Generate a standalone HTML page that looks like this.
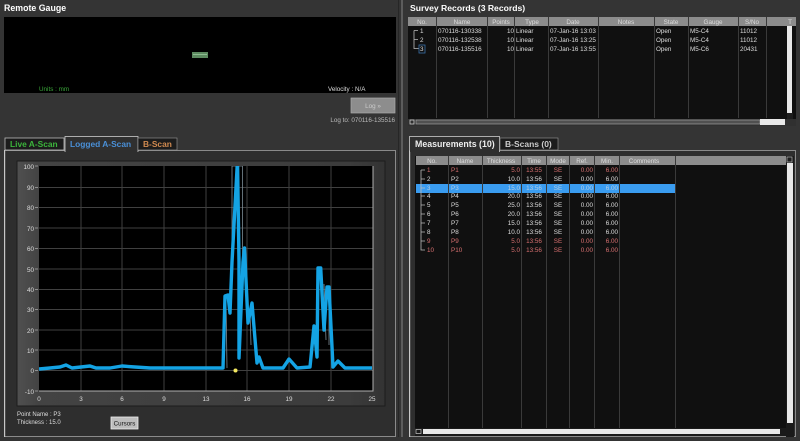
<!DOCTYPE html>
<html><head><meta charset="utf-8"><style>
html,body{margin:0;padding:0;background:#333;width:800px;height:441px;overflow:hidden}
svg{display:block;font-family:"Liberation Sans",sans-serif;filter:blur(.35px)}
text{font-size:6.3px;fill:#ddd}
.m{text-anchor:middle}.e{text-anchor:end}
.h text{fill:#ddd;text-anchor:middle;font-size:6.3px}
.r text{fill:#d87070}
.t{font-weight:bold;font-size:8.8px;fill:#fff}
</style></head><body>
<svg width="800" height="441" viewBox="0 0 800 441">
<defs>
<clipPath id="c"><rect x="39" y="166" width="334" height="225"/></clipPath>
<linearGradient id="g" x1="0" x2="1" y1="0" y2="0"><stop offset="0" stop-color="#505050"/><stop offset=".06" stop-color="#434343"/><stop offset=".9" stop-color="#3c3c3c"/><stop offset="1" stop-color="#333"/></linearGradient>
</defs>
<rect width="800" height="441" fill="#343434"/>
<text class="t" x="4" y="11">Remote Gauge</text>
<rect x="4" y="17" width="392" height="76" fill="#000"/>
<rect x="192" y="52" width="16" height="6" fill="#5d8a60"/>
<rect x="193" y="54" width="14" height="1" fill="#8dbb90"/>
<text x="39" y="91" style="fill:#3aa83a">Units : mm</text>
<text x="328" y="91" style="fill:#ddd">Velocity : N/A</text>
<rect x="351" y="98" width="44" height="15" fill="#8d8d8d" stroke="#aaa" stroke-width=".7"/>
<text class="m" x="373" y="108" style="fill:#ccc">Log »</text>
<text class="e" x="395" y="122" style="fill:#bbb">Log to: 070116-135516</text>

<!-- left tabs -->
<rect x="4.500" y="150.500" width="391" height="286" fill="#2e2e2e" stroke="#8a8a8a" stroke-width="1"/>
<rect x="4" y="150" width="1.200" height="287" fill="#c8c8c8"/>
<rect x="5" y="138" width="59" height="12" fill="#1c1c1c" stroke="#bbb" stroke-width=".8"/>
<rect x="65" y="136.500" width="73" height="15" fill="#303030" stroke="#ccc" stroke-width=".8"/>
<rect x="65.500" y="150" width="72" height="2" fill="#2e2e2e"/>
<rect x="138" y="138" width="39" height="12" fill="#1c1c1c" stroke="#999" stroke-width=".6"/>
<text x="10" y="147" style="font-size:8.400px;font-weight:bold;fill:#3cb53c">Live A-Scan</text>
<text x="70" y="147" style="font-size:8.400px;font-weight:bold;fill:#4a90d8">Logged A-Scan</text>
<text x="143" y="147" style="font-size:8.400px;font-weight:bold;fill:#d08a50">B-Scan</text>

<!-- plot panel -->
<rect x="17" y="161" width="368" height="245" fill="url(#g)" stroke="#1c1c1c"/>
<rect x="39" y="166" width="334" height="225" fill="#000"/>
<g stroke="#404040" stroke-width="1">
<path d="M81 166V391M122 166V391M164 166V391M206 166V391M247 166V391M289 166V391M331 166V391"/>
<path d="M39 187.500H373M39 207.500H373M39 228H373M39 248.500H373M39 269H373M39 289.500H373M39 309.500H373M39 330H373M39 350H373M39 370.500H373"/>
</g>
<path d="M39 391H373V166" fill="none" stroke="#b0b0b0" stroke-width="1"/>
<path d="M35 166H38M35 187.500H38M35 207.500H38M35 228H38M35 248.500H38M35 269H38M35 289.500H38M35 309.500H38M35 330H38M35 350H38M35 370.500H38M35 391H38" stroke="#aaa" stroke-width=".8"/>
<g>
<text class="e" x="34" y="169">100</text><text class="e" x="34" y="190">90</text><text class="e" x="34" y="210">80</text><text class="e" x="34" y="231">70</text><text class="e" x="34" y="251">60</text><text class="e" x="34" y="272">50</text><text class="e" x="34" y="292">40</text><text class="e" x="34" y="312">30</text><text class="e" x="34" y="333">20</text><text class="e" x="34" y="353">10</text><text class="e" x="34" y="373">0</text><text class="e" x="34" y="394">-10</text>
</g>
<g>
<text class="m" x="39" y="401">0</text><text class="m" x="81" y="401">3</text><text class="m" x="122" y="401">6</text><text class="m" x="164" y="401">9</text><text class="m" x="206" y="401">13</text><text class="m" x="247" y="401">16</text><text class="m" x="289" y="401">19</text><text class="m" x="331" y="401">22</text><text class="m" x="372" y="401">25</text>
</g>
<g clip-path="url(#c)">
<path d="M232 275L232 166H242.500V270M324 284L326 340M329 290V345M250 310L251 345M226 300L227 368" stroke="#7c8c96" stroke-width=".8" fill="none"/>
<polyline fill="none" stroke="#14a3e4" stroke-width="3.400" stroke-linejoin="round" points="39,369 50,368 60,367 66,365 72,368 90,366 96,368 110,368 122,366 135,367 150,368 180,368 223,368 225,296 228,295 230,313 232,262 237.500,160 239,262 239,358 243,262 244.500,248 248,323 252,303 257,363 259,357 263,368 283,368 289,359 297,368 310,367 314,326 317,357 318,268 320.700,268 324,330 327,287 329,287 333,367 338,361 345,368 372,368"/>
</g>
<circle cx="235.500" cy="370.500" r="2" fill="#f4e860"/>
<text x="17" y="416" style="font-size:6px">Point Name : P3</text>
<text x="17" y="424" style="font-size:6px">Thickness : 15.0</text>
<rect x="111" y="417" width="27" height="12" fill="#bdbdbd" stroke="#eee" stroke-width=".8"/>
<text class="m" x="124.500" y="425.500" style="fill:#111;font-size:6.200px">Cursors</text>

<!-- divider -->
<rect x="401" y="0" width="2" height="437" fill="#5c5c5c"/>
<rect x="398" y="0" width="1" height="437" fill="#262626"/>

<!-- survey -->
<text class="t" x="410" y="11" style="font-size:8.600px">Survey Records (3 Records)</text>
<rect x="408" y="17" width="388" height="103" fill="#101010"/>
<rect x="408" y="17" width="388" height="9" fill="#8c8c8c"/>
<g stroke="#3a3a3a" stroke-width="1"><path d="M436.500 17V118M487.500 17V118M514.500 17V118M548.500 17V118M598.500 17V118M654.500 17V118M688.500 17V118M738.500 17V118M766.500 17V118"/></g>
<g class="h">
<text x="422" y="24">No.</text><text x="462" y="24">Name</text><text x="501" y="24">Points</text><text x="532" y="24">Type</text><text x="573" y="24">Date</text><text x="626" y="24">Notes</text><text x="671" y="24">State</text><text x="713" y="24">Gauge</text><text x="752" y="24">S/No</text><text x="790" y="24">T</text>
</g>
<path d="M414 30.500H418M414 30.500V48.500H419M414 39.500H418" stroke="#bbb" fill="none" stroke-width=".8"/>
<rect x="419" y="45" width="6" height="8" fill="none" stroke="#3a6ea8" stroke-width=".8"/>
<text x="420" y="33">1</text><text x="420" y="42">2</text><text x="420" y="51">3</text>
<text x="438" y="33">070116-130338</text><text x="438" y="42">070116-132538</text><text x="438" y="51">070116-135516</text>
<text class="e" x="514" y="33">10</text><text class="e" x="514" y="42">10</text><text class="e" x="514" y="51">10</text>
<text x="516" y="33">Linear</text><text x="516" y="42">Linear</text><text x="516" y="51">Linear</text>
<text x="550" y="33">07-Jan-16 13:03</text><text x="550" y="42">07-Jan-16 13:25</text><text x="550" y="51">07-Jan-16 13:55</text>
<text x="656" y="33">Open</text><text x="656" y="42">Open</text><text x="656" y="51">Open</text>
<text x="690" y="33">M5-C4</text><text x="690" y="42">M5-C4</text><text x="690" y="51">M5-C6</text>
<text x="740" y="33">11012</text><text x="740" y="42">11012</text><text x="740" y="51">20431</text>
<rect x="787" y="26" width="5" height="90" fill="#e8e8e8"/>
<rect x="787" y="113" width="6" height="6" fill="#1e1e1e"/>
<rect x="408" y="119" width="388" height="7" fill="#303030"/>
<rect x="416" y="120" width="344" height="4" fill="#505050" stroke="#aaa" stroke-width=".6"/>
<rect x="760" y="119" width="25" height="6" fill="#e8e8e8"/>
<rect x="410" y="120" width="4" height="4" fill="none" stroke="#ccc" stroke-width=".8"/>

<!-- measurements tabs -->
<rect x="409.500" y="150.500" width="386" height="286" fill="#2e2e2e" stroke="#8a8a8a"/>
<rect x="409" y="150" width="1.200" height="287" fill="#c8c8c8"/>
<rect x="409.500" y="136.500" width="90" height="15" fill="#303030" stroke="#ccc" stroke-width=".8"/>
<rect x="410" y="150" width="89" height="2" fill="#2e2e2e"/>
<rect x="500" y="138" width="58" height="12" fill="#1c1c1c" stroke="#999" stroke-width=".6"/>
<text x="415" y="147" style="font-size:8.800px;font-weight:bold;fill:#eee">Measurements (10)</text>
<text x="505" y="147" style="font-size:8.500px;font-weight:bold;fill:#ccc">B-Scans (0)</text>

<rect x="415" y="156" width="372" height="272" fill="#101010"/>
<rect x="416" y="156" width="370" height="9" fill="#8c8c8c"/>
<rect x="416" y="184" width="260" height="9" fill="#3a9cf0"/>
<g stroke="#3a3a3a" stroke-width="1"><path d="M448.500 156V428M482.500 156V428M521.500 156V428M546.500 156V428M569.500 156V428M594.500 156V428M619.500 156V428M675.500 156V428"/></g>
<g class="h">
<text x="432" y="163">No.</text><text x="465" y="163">Name</text><text x="501" y="163">Thickness</text><text x="534" y="163">Time</text><text x="558" y="163">Mode</text><text x="582" y="163">Ref.</text><text x="607" y="163">Min.</text><text x="644" y="163">Comments</text>
</g>
<path d="M421 170H425M421 170V250H425M421 179H425M421 188H425M421 196H425M421 205H425M421 214H425M421 223H425M421 232H425M421 241H425" stroke="#bbb" fill="none" stroke-width=".8"/>
<g class="r"><text x="427" y="172">1</text><text x="451" y="172">P1</text><text class="e" x="520" y="172">5.0</text><text class="m" x="534" y="172">13:55</text><text class="m" x="558" y="172">SE</text><text class="e" x="593" y="172">0.00</text><text class="e" x="618" y="172">6.00</text></g>
<g><text x="427" y="181">2</text><text x="451" y="181">P2</text><text class="e" x="520" y="181">10.0</text><text class="m" x="534" y="181">13:56</text><text class="m" x="558" y="181">SE</text><text class="e" x="593" y="181">0.00</text><text class="e" x="618" y="181">6.00</text></g>
<g style="opacity:.75"><text x="427" y="190">3</text><text x="451" y="190">P3</text><text class="e" x="520" y="190">15.0</text><text class="m" x="534" y="190">13:56</text><text class="m" x="558" y="190">SE</text><text class="e" x="593" y="190">0.00</text><text class="e" x="618" y="190">6.00</text></g>
<g><text x="427" y="198">4</text><text x="451" y="198">P4</text><text class="e" x="520" y="198">20.0</text><text class="m" x="534" y="198">13:56</text><text class="m" x="558" y="198">SE</text><text class="e" x="593" y="198">0.00</text><text class="e" x="618" y="198">6.00</text></g>
<g><text x="427" y="207">5</text><text x="451" y="207">P5</text><text class="e" x="520" y="207">25.0</text><text class="m" x="534" y="207">13:56</text><text class="m" x="558" y="207">SE</text><text class="e" x="593" y="207">0.00</text><text class="e" x="618" y="207">6.00</text></g>
<g><text x="427" y="216">6</text><text x="451" y="216">P6</text><text class="e" x="520" y="216">20.0</text><text class="m" x="534" y="216">13:56</text><text class="m" x="558" y="216">SE</text><text class="e" x="593" y="216">0.00</text><text class="e" x="618" y="216">6.00</text></g>
<g><text x="427" y="225">7</text><text x="451" y="225">P7</text><text class="e" x="520" y="225">15.0</text><text class="m" x="534" y="225">13:56</text><text class="m" x="558" y="225">SE</text><text class="e" x="593" y="225">0.00</text><text class="e" x="618" y="225">6.00</text></g>
<g><text x="427" y="234">8</text><text x="451" y="234">P8</text><text class="e" x="520" y="234">10.0</text><text class="m" x="534" y="234">13:56</text><text class="m" x="558" y="234">SE</text><text class="e" x="593" y="234">0.00</text><text class="e" x="618" y="234">6.00</text></g>
<g class="r"><text x="427" y="243">9</text><text x="451" y="243">P9</text><text class="e" x="520" y="243">5.0</text><text class="m" x="534" y="243">13:56</text><text class="m" x="558" y="243">SE</text><text class="e" x="593" y="243">0.00</text><text class="e" x="618" y="243">6.00</text></g>
<g class="r"><text x="427" y="252">10</text><text x="451" y="252">P10</text><text class="e" x="520" y="252">5.0</text><text class="m" x="534" y="252">13:56</text><text class="m" x="558" y="252">SE</text><text class="e" x="593" y="252">0.00</text><text class="e" x="618" y="252">6.00</text></g>
<rect x="786" y="156" width="8" height="281" fill="#1a1a1a"/>
<rect x="787" y="163" width="6" height="260" fill="#e8e8e8"/>
<rect x="787" y="157" width="5" height="5" fill="#1e1e1e" stroke="#ccc" stroke-width=".6"/>
<rect x="415" y="428" width="379" height="8" fill="#1a1a1a"/>
<rect x="423" y="429" width="357" height="5" fill="#e8e8e8"/>
<rect x="416" y="429.500" width="5" height="4" fill="none" stroke="#ccc" stroke-width=".7"/>
</svg>
</body></html>
